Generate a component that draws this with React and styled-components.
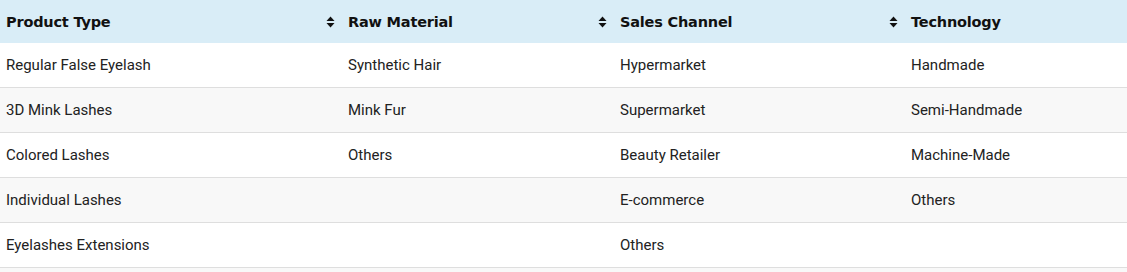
import React from 'react';
import styled, { createGlobalStyle } from 'styled-components';

const GlobalStyle = createGlobalStyle`
  html, body {
    margin: 0;
    padding: 0;
    background: #fff;
    overflow: hidden;
  }
`;

const Wrapper = styled.div`
  width: 1127px;
  overflow: hidden;
`;

const Table = styled.table`
  width: 1180px;
  table-layout: fixed;
  border-collapse: separate;
  border-spacing: 0;
  font-family: Roboto, 'Liberation Sans', sans-serif;
`;

const HeadCell = styled.th`
  box-sizing: border-box;
  width: ${({ $width }) => ($width ? `${$width}px` : 'auto')};
  height: 43px;
  padding: 0 7px 0 6px;
  background: #d9edf7;
  text-align: left;
  font-family: 'DejaVu Sans', 'Liberation Sans', sans-serif;
  font-size: 14.5px;
  font-weight: 700;
  color: #111;
  letter-spacing: -0.2px;
`;

const HeadInner = styled.div`
  display: flex;
  align-items: center;
  justify-content: space-between;
`;

const Row = styled.tr`
  background: ${({ $striped }) => ($striped ? '#f8f8f8' : '#fff')};
`;

const Cell = styled.td`
  box-sizing: border-box;
  height: 45px;
  padding: 0 6px;
  border-bottom: 1px solid #dedede;
  font-size: 15px;
  color: #222;
  vertical-align: middle;
`;

const SortIcon = () => (
  <svg width="9" height="12" viewBox="0 0 9 12" aria-hidden="true">
    <path d="M4.5 0.5 L8.5 5 L0.5 5 Z" fill="#111" />
    <path d="M4.5 11.5 L8.5 7 L0.5 7 Z" fill="#111" />
  </svg>
);

const columns = [
  { title: 'Product Type', width: 342 },
  { title: 'Raw Material', width: 272 },
  { title: 'Sales Channel', width: 291 },
  { title: 'Technology' },
];

const rows = [
  ['Regular False Eyelash', 'Synthetic Hair', 'Hypermarket', 'Handmade'],
  ['3D Mink Lashes', 'Mink Fur', 'Supermarket', 'Semi-Handmade'],
  ['Colored Lashes', 'Others', 'Beauty Retailer', 'Machine-Made'],
  ['Individual Lashes', '', 'E-commerce', 'Others'],
  ['Eyelashes Extensions', '', 'Others', ''],
  ['', '', '', ''],
];

const App = () => (
  <Wrapper>
    <GlobalStyle />
    <Table>
      <thead>
        <tr>
          {columns.map((col) => (
            <HeadCell key={col.title} $width={col.width}>
              <HeadInner>
                <span>{col.title}</span>
                <SortIcon />
              </HeadInner>
            </HeadCell>
          ))}
        </tr>
      </thead>
      <tbody>
        {rows.map((row, i) => (
          <Row key={i} $striped={i % 2 === 1}>
            {row.map((value, j) => (
              <Cell key={j}>{value}</Cell>
            ))}
          </Row>
        ))}
      </tbody>
    </Table>
  </Wrapper>
);

export default App;
